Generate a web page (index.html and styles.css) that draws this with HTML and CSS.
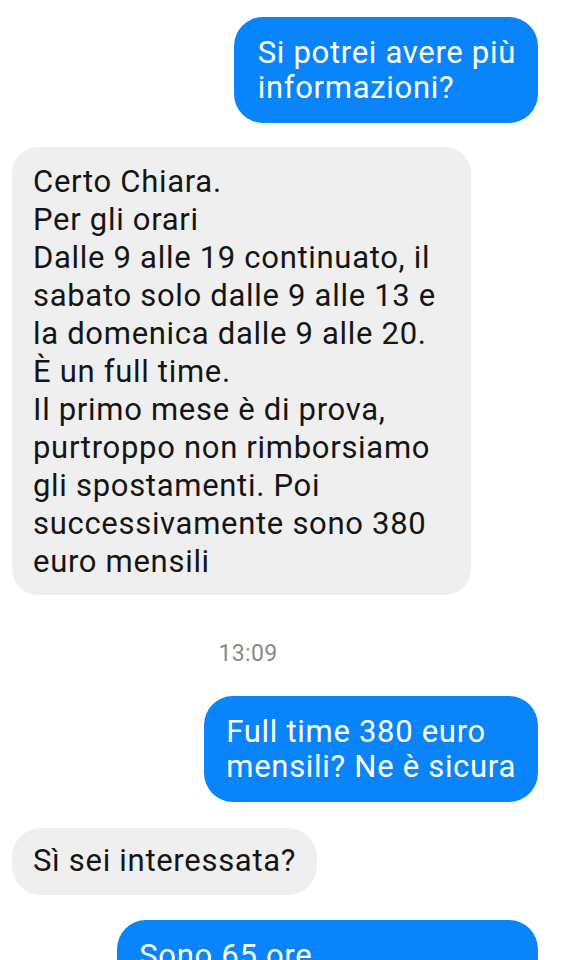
FILE: index.html
```html
<!DOCTYPE html>
<html lang="it">
<head>
    <meta charset="UTF-8">
    <meta name="viewport" content="width=device-width, initial-scale=1.0">
    <title>Chat</title>
    <link rel="stylesheet" href="styles.css">
</head>
<body>
    <div class="chat">
        <div class="bubble out first">Si potrei avere più<br>informazioni?</div>

        <div class="bubble in long">Certo Chiara.<br>Per gli orari<br>Dalle 9 alle 19 continuato, il sabato solo dalle 9 alle 13 e la domenica dalle 9 alle 20.<br>È un full time.<br>Il primo mese è di prova, purtroppo non rimborsiamo gli spostamenti. Poi successivamente sono 380 euro mensili</div>

        <div class="time">13:09</div>

        <div class="bubble out">Full time 380 euro<br>mensili? Ne è sicura</div>

        <div class="bubble in">Sì sei interessata?</div>

        <div class="bubble out last">Sono 65 ore<br>settimanali per 380 euro e</div>
    </div>
</body>
</html>
```

FILE: styles.css
```css
body {
    font-family: Roboto, 'Noto Sans', Arial, sans-serif;
    margin: 0;
    padding: 0;
    background: #fff;
    color: #111;
}

.chat {
    display: flex;
    flex-direction: column;
    padding: 17px 45px 0 12px;
    height: 943px;
    overflow: hidden;
}

.bubble {
    box-sizing: border-box;
    max-width: 459px;
    padding: 15px 22px;
    border-radius: 29px;
    font-size: 31px;
    line-height: 38px;
    letter-spacing: 0.7px;
}

.bubble.out {
    align-self: flex-end;
    background-color: #0a84fb;
    color: #fff;
    line-height: 35px;
    padding: 18px 22px 18px 22px;
    margin-top: 24px;
}

.bubble.in {
    align-self: flex-start;
    background-color: #efefef;
    color: #151515;
    padding: 14px 21px 15px 21px;
    margin-top: 26px;
}

.bubble.first {
    margin-top: 0;
    padding-left: 24px;
}

.bubble.long {
    margin-top: 24px;
    padding: 16px 21px 14px 21px;
    border-radius: 26px;
}

.bubble.last {
    margin-top: 25px;
}

.time {
    margin-top: 45px;
    margin-bottom: 4px;
    padding-right: 54px;
    text-align: center;
    font-size: 23px;
    line-height: 28px;
    letter-spacing: 0.3px;
    color: #8a8a8a;
}
```
